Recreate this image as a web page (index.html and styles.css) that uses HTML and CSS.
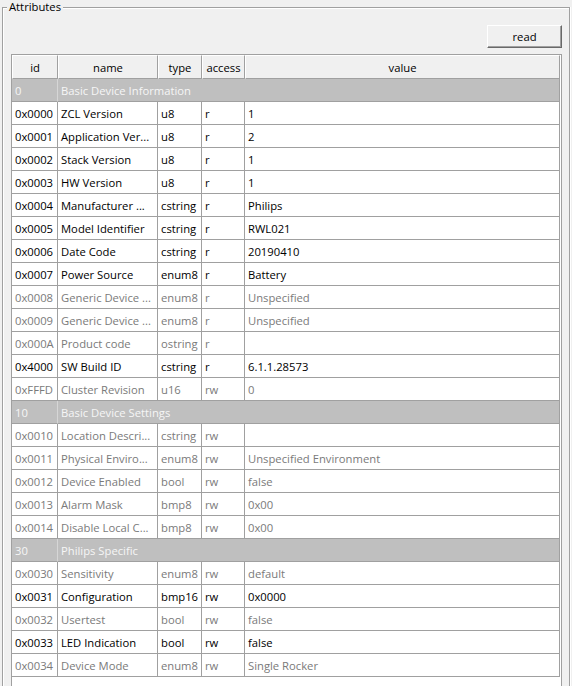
FILE: index.html
```html
<!DOCTYPE html>
<html>
<head>
<meta charset="utf-8">
<title>Attributes</title>
<link rel="stylesheet" href="styles.css">
</head>
<body>
<div class="groupbox">
  <span class="group-title">Attributes</span>
  <div class="toolbar">
    <button class="btn">read</button>
  </div>
  <div class="view">
    <div class="row head">
      <div class="cell">id</div>
      <div class="cell">name</div>
      <div class="cell">type</div>
      <div class="cell">access</div>
      <div class="cell">value</div>
    </div>

    <div class="row section">
      <div class="cell">0</div>
      <div class="cell span">Basic Device Information</div>
    </div>
    <div class="row"><div class="cell">0x0000</div><div class="cell">ZCL Version</div><div class="cell">u8</div><div class="cell">r</div><div class="cell">1</div></div>
    <div class="row"><div class="cell">0x0001</div><div class="cell">Application Ver...</div><div class="cell">u8</div><div class="cell">r</div><div class="cell">2</div></div>
    <div class="row"><div class="cell">0x0002</div><div class="cell">Stack Version</div><div class="cell">u8</div><div class="cell">r</div><div class="cell">1</div></div>
    <div class="row"><div class="cell">0x0003</div><div class="cell">HW Version</div><div class="cell">u8</div><div class="cell">r</div><div class="cell">1</div></div>
    <div class="row"><div class="cell">0x0004</div><div class="cell">Manufacturer ...</div><div class="cell">cstring</div><div class="cell">r</div><div class="cell">Philips</div></div>
    <div class="row"><div class="cell">0x0005</div><div class="cell">Model Identifier</div><div class="cell">cstring</div><div class="cell">r</div><div class="cell">RWL021</div></div>
    <div class="row"><div class="cell">0x0006</div><div class="cell">Date Code</div><div class="cell">cstring</div><div class="cell">r</div><div class="cell">20190410</div></div>
    <div class="row"><div class="cell">0x0007</div><div class="cell">Power Source</div><div class="cell">enum8</div><div class="cell">r</div><div class="cell">Battery</div></div>
    <div class="row off"><div class="cell">0x0008</div><div class="cell">Generic Device ...</div><div class="cell">enum8</div><div class="cell">r</div><div class="cell">Unspecified</div></div>
    <div class="row off"><div class="cell">0x0009</div><div class="cell">Generic Device ...</div><div class="cell">enum8</div><div class="cell">r</div><div class="cell">Unspecified</div></div>
    <div class="row off"><div class="cell">0x000A</div><div class="cell">Product code</div><div class="cell">ostring</div><div class="cell">r</div><div class="cell"></div></div>
    <div class="row"><div class="cell">0x4000</div><div class="cell">SW Build ID</div><div class="cell">cstring</div><div class="cell">r</div><div class="cell">6.1.1.28573</div></div>
    <div class="row off"><div class="cell">0xFFFD</div><div class="cell">Cluster Revision</div><div class="cell">u16</div><div class="cell">rw</div><div class="cell">0</div></div>

    <div class="row section">
      <div class="cell">10</div>
      <div class="cell span">Basic Device Settings</div>
    </div>
    <div class="row off"><div class="cell">0x0010</div><div class="cell">Location Descri...</div><div class="cell">cstring</div><div class="cell">rw</div><div class="cell"></div></div>
    <div class="row off"><div class="cell">0x0011</div><div class="cell">Physical Enviro...</div><div class="cell">enum8</div><div class="cell">rw</div><div class="cell">Unspecified Environment</div></div>
    <div class="row off"><div class="cell">0x0012</div><div class="cell">Device Enabled</div><div class="cell">bool</div><div class="cell">rw</div><div class="cell">false</div></div>
    <div class="row off"><div class="cell">0x0013</div><div class="cell">Alarm Mask</div><div class="cell">bmp8</div><div class="cell">rw</div><div class="cell">0x00</div></div>
    <div class="row off"><div class="cell">0x0014</div><div class="cell">Disable Local C...</div><div class="cell">bmp8</div><div class="cell">rw</div><div class="cell">0x00</div></div>

    <div class="row section">
      <div class="cell">30</div>
      <div class="cell span">Philips Specific</div>
    </div>
    <div class="row off"><div class="cell">0x0030</div><div class="cell">Sensitivity</div><div class="cell">enum8</div><div class="cell">rw</div><div class="cell">default</div></div>
    <div class="row"><div class="cell">0x0031</div><div class="cell">Configuration</div><div class="cell">bmp16</div><div class="cell">rw</div><div class="cell">0x0000</div></div>
    <div class="row off"><div class="cell">0x0032</div><div class="cell">Usertest</div><div class="cell">bool</div><div class="cell">rw</div><div class="cell">false</div></div>
    <div class="row"><div class="cell">0x0033</div><div class="cell">LED Indication</div><div class="cell">bool</div><div class="cell">rw</div><div class="cell">false</div></div>
    <div class="row off"><div class="cell">0x0034</div><div class="cell">Device Mode</div><div class="cell">enum8</div><div class="cell">rw</div><div class="cell">Single Rocker</div></div>
  </div>
</div>
</body>
</html>
```

FILE: styles.css
```css
html, body {
  margin: 0;
  height: 686px;
  overflow: hidden;
  background: #f0f0f0;
  font-family: "Open Sans", "Noto Sans", sans-serif;
  font-size: 11.25px;
  color: #000;
}

.groupbox {
  position: relative;
  margin: 7px 2px 0 2px;
  padding: 17px 7px 0 8px;
  height: 679px;
  border: 1px solid #a0a0a0;
  border-bottom: none;
  box-shadow: inset 1px 1px 0 #fff, 1px 0 0 #fff;
  box-sizing: border-box;
}

.group-title {
  position: absolute;
  top: -9px;
  left: 4px;
  padding: 0 2px;
  line-height: 16px;
  background: #f0f0f0;
}

.toolbar {
  display: flex;
  justify-content: flex-end;
}

.btn {
  width: 75px;
  height: 23px;
  padding: 0;
  margin: 0;
  font: inherit;
  color: #000;
  background: #f0f0f0;
  border: 1px solid;
  border-color: #fff #696969 #696969 #fff;
  box-shadow: inset -1px -1px 0 #a0a0a0;
  box-sizing: border-box;
}

.view {
  margin-top: 6px;
  height: 632px;
  background: #fff;
  border: 1px solid #a0a0a0;
  border-bottom: none;
  box-sizing: border-box;
  overflow: hidden;
}

.row {
  display: grid;
  grid-template-columns: 46px 100px 44px 43px 315px;
  width: 548px;
  height: 23px;
}

.cell {
  box-sizing: border-box;
  border-right: 1px solid #a0a0a0;
  border-bottom: 1px solid #a0a0a0;
  padding: 1px 0 0 3px;
  line-height: 22px;
  white-space: nowrap;
  overflow: hidden;
}

.row.head {
  height: 24px;
}

.row.head .cell {
  background: #f0f0f0;
  text-align: center;
  padding: 1px 0 0 0;
  line-height: 21px;
  border-top: 1px solid #fff;
  border-left: 1px solid #fff;
  border-right: 1px solid #a0a0a0;
  border-bottom: 1px solid #a0a0a0;
}

.row.section {
  background: #bfbfbf;
  color: #f6f6f6;
}

.row.section .cell {
  border-right-color: #d6d6d6;
}

.row.section .cell.span {
  grid-column: 2 / 6;
  border-right-color: #a0a0a0;
}

.row.off {
  color: #7a7a7a;
}
```
